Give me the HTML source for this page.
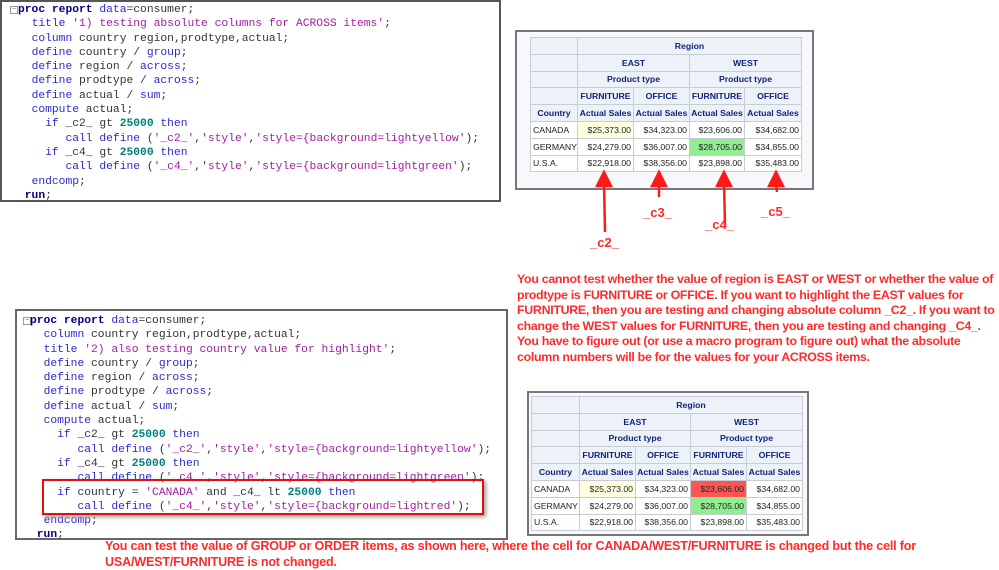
<!DOCTYPE html>
<html><head><meta charset="utf-8"><style>
body{margin:0;width:999px;height:570px;background:#fff;position:relative;overflow:hidden;font-family:"Liberation Sans",Arial,sans-serif}
.code{position:absolute;border:2px solid #555;background:#fff;box-sizing:border-box}
.code pre{margin:0;font-family:"Liberation Mono","Courier New",monospace;font-size:11.3px;line-height:14.3px;color:#333;position:absolute}
.k{color:#2a2acc}.s{color:#a020a0}.n{color:#008080;font-weight:bold}.b{color:#000080;font-weight:bold}
.m{position:absolute;width:6px;height:6px;border:1px solid #999;font-size:7px;line-height:6px;text-align:center;color:#666}
.tb{position:absolute;border:2px solid #777;background:#f6f8fc;box-sizing:border-box}
table{position:absolute;border-collapse:collapse;font-size:8.7px;table-layout:fixed}
td{border:1px solid #c8ccd4;height:16.8px;padding:0 2px;white-space:nowrap;overflow:hidden;box-sizing:border-box}
td.h{background:#edf2f9;color:#112277;font-weight:bold;text-align:center;padding:0}
td.d{background:#fff;color:#222;text-align:right}
td.c{background:#fff;color:#222;text-align:left}
.red{position:absolute;color:#ff2a2a;font-weight:bold;font-size:12.4px;line-height:15.6px;letter-spacing:-0.3px}
.lbl{position:absolute;color:#ff2a2a;font-weight:bold;font-size:13px}
</style></head><body>

<div class="code" style="left:0;top:0;width:501px;height:202px">
<div class="m" style="left:8px;top:4px">−</div>
<pre style="left:16px;top:1px"><span class="b">proc report</span> <span class="k">data</span>=consumer;
  <span class="k">title</span> <span class="s">'1) testing absolute columns for ACROSS items'</span>;
  <span class="k">column</span> country region,prodtype,actual;
  <span class="k">define</span> country / <span class="k">group</span>;
  <span class="k">define</span> region / <span class="k">across</span>;
  <span class="k">define</span> prodtype / <span class="k">across</span>;
  <span class="k">define</span> actual / <span class="k">sum</span>;
  <span class="k">compute</span> actual;
    <span class="k">if</span> _c2_ gt <span class="n">25000</span> <span class="k">then</span>
       <span class="k">call define</span> (<span class="s">'_c2_'</span>,<span class="s">'style'</span>,<span class="s">'style={background=lightyellow'</span>);
    <span class="k">if</span> _c4_ gt <span class="n">25000</span> <span class="k">then</span>
       <span class="k">call define</span> (<span class="s">'_c4_'</span>,<span class="s">'style'</span>,<span class="s">'style={background=lightgreen'</span>);
  <span class="k">endcomp</span>;
<span class="b"> run</span>;</pre>
</div>

<div class="tb" style="left:515px;top:30px;width:299px;height:160px"></div>
<table style="left:530px;top:37px;width:271px">
<colgroup><col style="width:47px"><col style="width:56px"><col style="width:56px"><col style="width:55px"><col style="width:57px"></colgroup>
<tr><td class="h"></td><td class="h" colspan="4">Region</td></tr>
<tr><td class="h"></td><td class="h" colspan="2">EAST</td><td class="h" colspan="2">WEST</td></tr>
<tr><td class="h"></td><td class="h" colspan="2">Product type</td><td class="h" colspan="2">Product type</td></tr>
<tr><td class="h"></td><td class="h">FURNITURE</td><td class="h">OFFICE</td><td class="h">FURNITURE</td><td class="h">OFFICE</td></tr>
<tr><td class="h">Country</td><td class="h">Actual Sales</td><td class="h">Actual Sales</td><td class="h">Actual Sales</td><td class="h">Actual Sales</td></tr>
<tr><td class="c">CANADA</td><td class="d" style="background:#ffffe0">$25,373.00</td><td class="d">$34,323.00</td><td class="d">$23,606.00</td><td class="d">$34,682.00</td></tr>
<tr><td class="c">GERMANY</td><td class="d">$24,279.00</td><td class="d">$36,007.00</td><td class="d" style="background:#90ee90">$28,705.00</td><td class="d">$34,855.00</td></tr>
<tr><td class="c">U.S.A.</td><td class="d">$22,918.00</td><td class="d">$38,356.00</td><td class="d">$23,898.00</td><td class="d">$35,483.00</td></tr>
</table>

<svg style="position:absolute;left:0;top:0" width="999" height="570">
<g stroke="#ff1a1a" stroke-width="2.5" fill="#ff1a1a">
<line x1="604" y1="182" x2="605" y2="232"/><polygon points="604,172 597,186 611,186"/>
<line x1="659" y1="182" x2="659" y2="197"/><polygon points="659,172 652,186 666,186"/>
<line x1="724" y1="182" x2="725" y2="225"/><polygon points="724,172 717,186 731,186"/>
<line x1="776" y1="182" x2="777" y2="192"/><polygon points="776,172 769,186 783,186"/>
</g></svg>
<div class="lbl" style="left:590px;top:235px">_c2_</div>
<div class="lbl" style="left:643px;top:205px">_c3_</div>
<div class="lbl" style="left:705px;top:217px">_c4_</div>
<div class="lbl" style="left:761px;top:204px">_c5_</div>

<div class="red" style="left:517px;top:272px;width:482px">You cannot test whether the value of region is EAST or WEST or whether the value of prodtype is FURNITURE or OFFICE. If you want to highlight the EAST values for FURNITURE, then you are testing and changing absolute column _C2_. If you want to change the WEST values for FURNITURE, then you are testing and changing _C4_. You have to figure out (or use a macro program to figure out) what the absolute column numbers will be for the values for your ACROSS items.</div>

<div class="code" style="left:15px;top:309px;width:493px;height:231px;border-color:#666">
<div class="m" style="left:6px;top:6px">−</div>
<pre style="left:13px;top:3px"><span class="b">proc report</span> <span class="k">data</span>=consumer;
  <span class="k">column</span> country region,prodtype,actual;
  <span class="k">title</span> <span class="s">'2) also testing country value for highlight'</span>;
  <span class="k">define</span> country / <span class="k">group</span>;
  <span class="k">define</span> region / <span class="k">across</span>;
  <span class="k">define</span> prodtype / <span class="k">across</span>;
  <span class="k">define</span> actual / <span class="k">sum</span>;
  <span class="k">compute</span> actual;
    <span class="k">if</span> _c2_ gt <span class="n">25000</span> <span class="k">then</span>
       <span class="k">call define</span> (<span class="s">'_c2_'</span>,<span class="s">'style'</span>,<span class="s">'style={background=lightyellow'</span>);
    <span class="k">if</span> _c4_ gt <span class="n">25000</span> <span class="k">then</span>
       <span class="k">call define</span> (<span class="s">'_c4_'</span>,<span class="s">'style'</span>,<span class="s">'style={background=lightgreen'</span>);
    <span class="k">if</span> country = <span class="s">'CANADA'</span> and _c4_ lt <span class="n">25000</span> <span class="k">then</span>
       <span class="k">call define</span> (<span class="s">'_c4_'</span>,<span class="s">'style'</span>,<span class="s">'style={background=lightred'</span>);
  <span class="k">endcomp</span>;
<span class="b"> run</span>;</pre>
</div>
<div style="position:absolute;left:42px;top:479px;width:438px;height:32px;border:2px solid #e01010;box-shadow:2px 2px 4px #999"></div>

<div class="tb" style="left:527px;top:391px;width:282px;height:145px"></div>
<table style="left:531px;top:396px;width:271px">
<colgroup><col style="width:48px"><col style="width:56px"><col style="width:55px"><col style="width:56px"><col style="width:56px"></colgroup>
<tr><td class="h"></td><td class="h" colspan="4">Region</td></tr>
<tr><td class="h"></td><td class="h" colspan="2">EAST</td><td class="h" colspan="2">WEST</td></tr>
<tr><td class="h"></td><td class="h" colspan="2">Product type</td><td class="h" colspan="2">Product type</td></tr>
<tr><td class="h"></td><td class="h">FURNITURE</td><td class="h">OFFICE</td><td class="h">FURNITURE</td><td class="h">OFFICE</td></tr>
<tr><td class="h">Country</td><td class="h">Actual Sales</td><td class="h">Actual Sales</td><td class="h">Actual Sales</td><td class="h">Actual Sales</td></tr>
<tr><td class="c">CANADA</td><td class="d" style="background:#ffffe0">$25,373.00</td><td class="d">$34,323.00</td><td class="d" style="background:#ff5555">$23,606.00</td><td class="d">$34,682.00</td></tr>
<tr><td class="c">GERMANY</td><td class="d">$24,279.00</td><td class="d">$36,007.00</td><td class="d" style="background:#90ee90">$28,705.00</td><td class="d">$34,855.00</td></tr>
<tr><td class="c">U.S.A.</td><td class="d">$22,918.00</td><td class="d">$38,356.00</td><td class="d">$23,898.00</td><td class="d">$35,483.00</td></tr>
</table>

<div class="red" style="left:105px;top:539px;width:894px;font-size:12.6px;letter-spacing:-0.2px">You can test the value of GROUP or ORDER items, as shown here, where the cell for CANADA/WEST/FURNITURE is changed but the cell for USA/WEST/FURNITURE is not changed.</div>
</body></html>
